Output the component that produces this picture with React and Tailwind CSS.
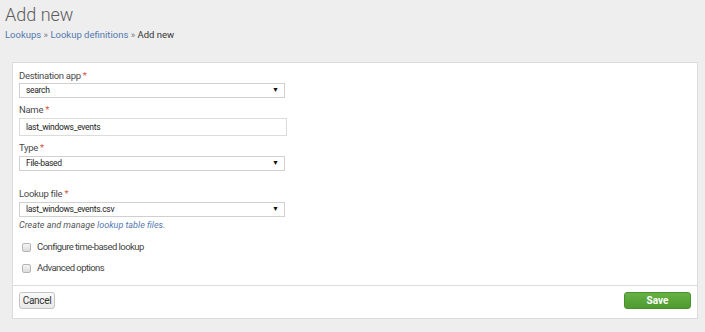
export default function App() {
  const font = { fontFamily: 'Roboto, "Open Sans", sans-serif' };

  const Label = ({ children, className = '' }) => (
    <div className={`text-[9.5px] leading-[14px] tracking-[-0.3px] text-[#4a4a4a] ${className}`}>
      {children} <span className="text-[#d6563c]">*</span>
    </div>
  );

  const Select = ({ value, className = '' }) => (
    <div className={`w-[266px] h-[15px] border border-[#d0d0d0] bg-white flex items-center justify-between pl-[6px] pr-[5px] ${className}`}>
      <span className="text-[8.5px] tracking-[-0.3px] text-[#222] leading-none">{value}</span>
      <span className="text-[7px] text-[#111] leading-none">▼</span>
    </div>
  );

  const Check = ({ children, className = '' }) => (
    <label className={`flex items-center h-[14px] pl-[3px] ${className}`}>
      <span className="w-[9px] h-[9px] rounded-[2px] border border-[#b5b5b5] bg-gradient-to-b from-[#f4f4f4] to-[#dcdcdc]" />
      <span className="ml-[6px] text-[9.5px] tracking-[-0.55px] text-[#444]">{children}</span>
    </label>
  );

  return (
    <div className="w-[705px] h-[332px] bg-[#eeeeee] overflow-hidden" style={font}>
      <div className="pl-[5px] pt-[3px]">
        <h1 className="text-[18px] leading-[24px] font-light text-[#5c5c5c]">Add new</h1>
        <div className="mt-[1px] text-[9.5px] leading-[14px] text-[#777]">
          <span className="text-[#5379af]">Lookups</span> » <span className="text-[#5379af]">Lookup definitions</span> » <span className="text-[#333]">Add new</span>
        </div>
      </div>

      <div className="mt-[20px] ml-[12px] w-[686px] bg-white border border-[#dcdcdc]">
        <div className="pl-[6px] pt-[6px]">
          <Label>Destination app</Label>
          <Select value="search" />

          <Label className="mt-[5px]">Name</Label>
          <div className="mt-[1px] w-[268px] h-[18px] border border-[#dcdcdc] flex items-center pl-[6px] text-[8.5px] tracking-[-0.3px] text-[#222]">
            last_windows_events
          </div>

          <Label className="mt-[5px]">Type</Label>
          <Select value="File-based" className="mt-[1px]" />

          <Label className="mt-[16px]">Lookup file</Label>
          <Select value="last_windows_events.csv" className="mt-[1px]" />

          <div className="mt-[2px] text-[9px] leading-[12px] italic text-[#555]">
            Create and manage <span className="text-[#5379af]">lookup table files.</span>
          </div>

          <Check className="mt-[9px]">Configure time-based lookup</Check>
          <Check className="mt-[7px]">Advanced options</Check>
        </div>

        <div className="mt-[10px] border-t border-[#dcdcdc] px-[6px] pt-[6px] pb-[9px] flex items-center justify-between">
          <button className="h-[17px] w-[36px] rounded-[3px] border border-[#c4c4c4] bg-gradient-to-b from-[#fafafa] to-[#e8e8e8] text-[10px] tracking-[-0.3px] text-[#333] leading-none">
            Cancel
          </button>
          <button className="h-[17px] w-[67px] rounded-[3px] border border-[#4a8f2d] bg-gradient-to-b from-[#65b143] to-[#4f9b31] text-[10px] font-bold text-white leading-none">
            Save
          </button>
        </div>
      </div>
    </div>
  );
}
